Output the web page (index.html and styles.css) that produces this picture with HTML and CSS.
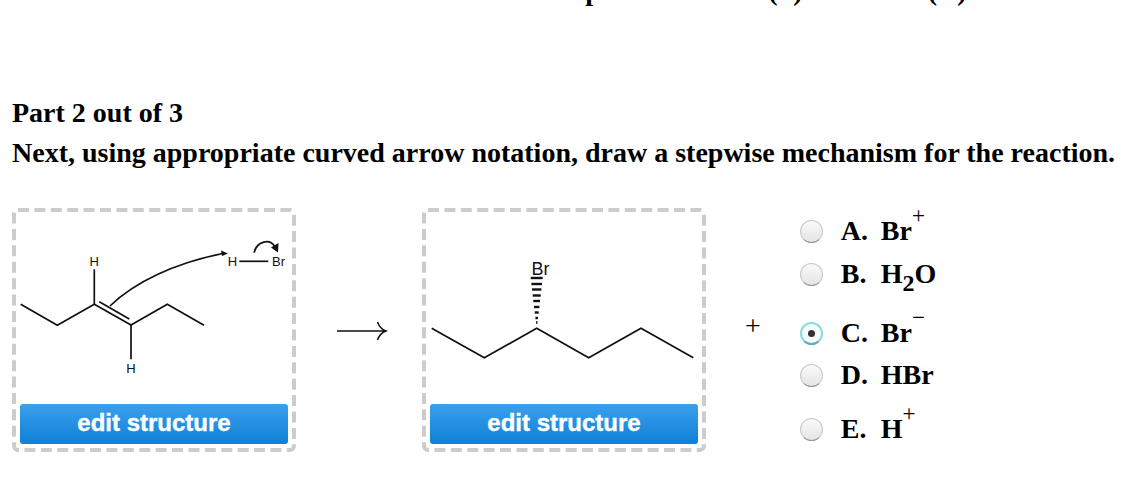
FILE: index.html
```html
<!DOCTYPE html>
<html lang="en">
<head>
    <meta charset="UTF-8">
    <meta name="viewport" content="width=device-width, initial-scale=1.0">
    <title>Part 2 out of 3</title>
    <link rel="stylesheet" href="styles.css">
</head>
<body>
    <!-- Tail of the previous part, cut off by the top of the window -->
    <div class="cut-line">
        <p>Draw the products: both (S) and form (R)</p>
    </div>

    <div class="question">
        <p class="part">Part 2 out of 3</p>
        <p class="prompt">Next, using appropriate curved arrow notation, draw a stepwise mechanism for the reaction.</p>
    </div>

    <div class="answer-row">
        <!-- Reactants -->
        <div class="card">
            <svg class="frame" viewBox="0 0 284 244"><rect x="2" y="2" width="280" height="240" rx="4"/></svg>
            <svg class="drawing" viewBox="20 216 268 188">
                <polyline class="bond" points="20.7,304.3 57.3,325.3 94.3,304.3 131,325 167.3,304.3 204,325.3"/>
                <line class="bond" x1="99.3" y1="301.7" x2="129.3" y2="319"/>
                <line class="bond" x1="94.3" y1="304.3" x2="94.3" y2="269.3"/>
                <line class="bond" x1="131" y1="325" x2="131" y2="359.3"/>
                <line class="bond" x1="239.3" y1="261.3" x2="268.3" y2="261.3"/>
                <text class="atom" x="94.3" y="266">H</text>
                <text class="atom" x="131" y="373">H</text>
                <text class="atom" x="232.5" y="266">H</text>
                <text class="atom" x="278.5" y="266">Br</text>
                <path class="bond" d="M110 306C135 282 175 263 223 253.5"/>
                <polygon class="head" points="228,253.6 221,250.5 222,256"/>
                <path class="bond" d="M254 252.7C257 241 270 238 275 247"/>
                <polygon class="head" points="278,252.5 278.5,243 271,247.5"/>
            </svg>
            <button class="edit-btn" type="button">edit structure</button>
        </div>

        <svg class="reaction-arrow" viewBox="0 0 52 24">
            <path d="M1 12H50M41.5 3C43 7.5 46 10.5 50 12C46 13.5 43 16.5 41.5 21"/>
        </svg>

        <!-- Product -->
        <div class="card">
            <svg class="frame" viewBox="0 0 284 244"><rect x="2" y="2" width="280" height="240" rx="4"/></svg>
            <svg class="drawing" viewBox="430 216 268 188">
                <polyline class="bond" points="431.7,328.3 484.3,357.7 536.7,328.3 588.7,357.7 641,328.3 693.3,357.7"/>
                <text class="atom atom-big" x="531.5" y="274.5">Br</text>
                <g class="hash">
                    <line x1="530.7" y1="278" x2="542.7" y2="278"/>
                    <line x1="531.4" y1="284" x2="542" y2="284"/>
                    <line x1="532" y1="289.5" x2="541.4" y2="289.5"/>
                    <line x1="532.7" y1="295.5" x2="540.7" y2="295.5"/>
                    <line x1="533.3" y1="301" x2="540" y2="301"/>
                    <line x1="534" y1="307" x2="539.4" y2="307"/>
                    <line x1="534.7" y1="312.5" x2="538.7" y2="312.5"/>
                    <line x1="535.4" y1="318" x2="538" y2="318"/>
                    <line x1="536" y1="322.5" x2="537.4" y2="322.5"/>
                </g>
            </svg>
            <button class="edit-btn" type="button">edit structure</button>
        </div>

        <span class="plus">+</span>

        <!-- Choices -->
        <div class="choices">
            <div class="choice">
                <span class="radio"></span>
                <span class="letter">A.</span>
                <span>Br<span class="charge">+</span></span>
            </div>
            <div class="choice choice-b">
                <span class="radio"></span>
                <span class="letter">B.</span>
                <span>H<sub>2</sub>O</span>
            </div>
            <div class="choice choice-c">
                <span class="radio selected"></span>
                <span class="letter">C.</span>
                <span>Br<span class="charge">−</span></span>
            </div>
            <div class="choice choice-d">
                <span class="radio"></span>
                <span class="letter">D.</span>
                <span>HBr</span>
            </div>
            <div class="choice choice-e">
                <span class="radio"></span>
                <span class="letter">E.</span>
                <span>H<span class="charge">+</span></span>
            </div>
        </div>
    </div>
</body>
</html>
```

FILE: styles.css
```css
/* General styling */
body {
    font-family: "Liberation Serif", serif;
    margin: 0;
    padding: 0 0 0 12px;
    background-color: #fff;
    color: #000;
    overflow: hidden;
}

p {
    margin: 0;
}

.cut-line {
    height: 6px;
    overflow: hidden;
}

.cut-line p {
    margin-top: -24px;
    padding-left: 455px;
    font-size: 28px;
    line-height: 30px;
    font-weight: bold;
    white-space: nowrap;
}

/* Question text */
.question {
    padding-top: 92px;
    font-weight: bold;
    white-space: nowrap;
}

.part {
    font-size: 28px;
    line-height: 30px;
}

.prompt {
    margin-top: 9px;
    font-size: 28px;
    line-height: 32px;
}

/* Row with the two structures and the choices */
.answer-row {
    display: flex;
    align-items: flex-start;
    margin-top: 39px;
}

.card {
    position: relative;
    box-sizing: border-box;
    width: 284px;
    height: 244px;
    padding: 8px;
}

.frame {
    position: absolute;
    top: 0;
    left: 0;
    width: 284px;
    height: 244px;
}

.frame rect {
    fill: none;
    stroke: #ccc;
    stroke-width: 4;
    stroke-dasharray: 11 5.4;
}

.drawing {
    display: block;
    width: 268px;
    height: 188px;
}

.bond {
    fill: none;
    stroke: #111;
    stroke-width: 1.7;
}

.head {
    fill: #111;
}

.hash line {
    stroke: #111;
    stroke-width: 2.4;
}

.atom {
    font-family: "Liberation Sans", sans-serif;
    font-size: 13px;
    text-anchor: middle;
    fill: #111;
}

.atom-big {
    font-size: 18px;
    text-anchor: start;
}

.edit-btn {
    display: block;
    width: 268px;
    height: 40px;
    padding: 0 0 3px;
    border: none;
    border-radius: 3px;
    background: linear-gradient(#3ba0ec, #0e80d6);
    color: #fff;
    font-family: "Liberation Sans", sans-serif;
    font-size: 24px;
    font-weight: bold;
    -webkit-text-stroke: 0.4px #fff;
}

.reaction-arrow {
    flex: none;
    width: 52px;
    height: 24px;
    margin: 111px 34px 0 40px;
}

.reaction-arrow path {
    fill: none;
    stroke: #111;
    stroke-width: 1.5;
}

.plus {
    margin: 102px 39px 0 39px;
    font-size: 28px;
    line-height: 32px;
}

/* Choices */
.choices {
    padding-top: 8px;
}

.choice {
    display: flex;
    align-items: center;
    height: 30px;
    font-size: 28px;
    font-weight: bold;
    white-space: nowrap;
}

.choice-b {
    margin-top: 13px;
}

.choice-c {
    margin-top: 29px;
}

.choice-d {
    margin-top: 12px;
}

.choice-e {
    margin-top: 24px;
}

.radio {
    flex: none;
    box-sizing: border-box;
    width: 23px;
    height: 23px;
    margin-right: 18px;
    border: 1px solid #c8c8c8;
    border-bottom-color: #999;
    border-radius: 50%;
    background: linear-gradient(#fafafa, #e4e4e4);
}

.radio.selected {
    position: relative;
    border: 2px solid #8adbe0;
    border-bottom-color: #5fb0b8;
    background: #f6fbfc;
}

.radio.selected::after {
    content: "";
    position: absolute;
    top: 6px;
    left: 6px;
    width: 7px;
    height: 7px;
    border-radius: 50%;
    background: #333;
}

.letter {
    width: 40px;
}

.charge {
    font-size: 23px;
    font-weight: normal;
    vertical-align: 17px;
    line-height: 0;
}

sub {
    font-size: 24px;
    line-height: 0;
    vertical-align: -8px;
}
```
